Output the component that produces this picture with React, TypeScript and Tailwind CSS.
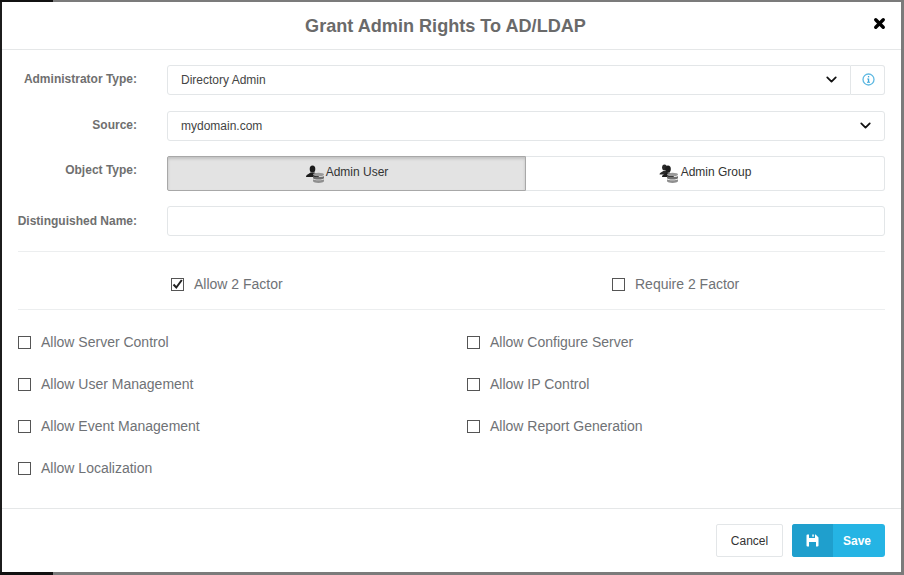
import React from 'react';
import { ChevronDown, X } from 'lucide-react';

const AdminIcon: React.FC<{ group?: boolean }> = ({ group = false }) => (
  <svg width="20" height="20" viewBox="0 0 20 20" className="shrink-0">
    {group && (
      <>
        <ellipse cx="5.500" cy="3.500" rx="2.400" ry="3" fill="#2a2a2a" />
        <path d="M0.500 10.500c0-2 2.500-2.500 3.800-3.500h2.400c1.300 1 3 1.500 3.500 3.500z" fill="#2a2a2a" />
      </>
    )}
    <ellipse cx={group ? 9 : 7.500} cy="5" rx="2.800" ry="3.500" fill="#1c1c1c" />
    <path d={group ? 'M3 13c0-2.500 3-3 4.500-4.500h3c1.500 1.500 4 2 4.500 4.500z' : 'M1 13c0-2.500 3-3 4.500-4.500h4c1.500 1.500 4 2 4.500 4.500z'} fill="#1c1c1c" />
    <ellipse cx="13.500" cy="10.500" rx="5.500" ry="1.800" fill="#9a9a9a" />
    <path d="M8 12c1 1.400 10 1.400 11 0v2.300c-1 1.600-10 1.600-11 0z" fill="#6f6f6f" />
    <path d="M8 15.300c1 1.400 10 1.400 11 0v2c-1 2.200-10 2.200-11 0z" fill="#8f8f8f" />
  </svg>
);

const InfoIcon: React.FC = () => (
  <svg width="13" height="13" viewBox="0 0 13 13" className="shrink-0">
    <circle cx="6.500" cy="6.500" r="5.500" fill="none" stroke="#5fb9e2" strokeWidth="1.300" />
    <rect x="5.900" y="3" width="1.300" height="1.400" fill="#3fa6d8" />
    <path d="M5.200 5.500h2v3.300h.8v.9H5v-.9h.9V6.400h-.7z" fill="#3fa6d8" />
  </svg>
);

const SaveIcon: React.FC = () => (
  <svg width="13" height="13" viewBox="0 0 13 13" className="shrink-0">
    <path
      fillRule="evenodd"
      d="M0.500 1.500a1 1 0 0 1 1-1h1.500v3.500h6V0.500h.6l2.900 2.900v8.100a1 1 0 0 1-1 1h-1.500V8H3v4.500H1.500a1 1 0 0 1-1-1z"
      fill="#fff"
    />
    <rect x="6.300" y="0.500" width="1.500" height="2.200" fill="#fff" />
  </svg>
);

const Check: React.FC<{ label: string; checked?: boolean }> = ({ label, checked = false }) => (
  <label className="flex items-center gap-[10px] text-[14px] text-[#6f7276]">
    <span className="w-[13px] h-[13px] border border-[#555] bg-white flex items-center justify-center shrink-0">
      {checked && (
        <svg width="11" height="11" viewBox="0 0 11 11">
          <path d="M1.500 5.500l2.800 3L9.800 1" fill="none" stroke="#222" strokeWidth="2" />
        </svg>
      )}
    </span>
    {label}
  </label>
);

const FieldLabel: React.FC<{ text: string }> = ({ text }) => (
  <div className="w-[135px] -mt-[2px] text-right text-[12px] font-bold text-[#6f6f6f] whitespace-nowrap shrink-0">{text}</div>
);

const Select: React.FC<{ value: string; className?: string }> = ({ value, className = '' }) => (
  <div className={`flex-1 h-[30px] border border-[#e3e6e8] rounded-[3px] bg-white flex items-center justify-between pl-[13px] pr-[10px] text-[12px] text-[#444] ${className}`}>
    {value}
    <ChevronDown className="w-[17px] h-[17px] text-[#111] -mt-[2px]" strokeWidth={2.500} />
  </div>
);

const App: React.FC = () => {
  return (
    <div className="w-[904px] h-[575px] flex flex-col bg-[#7b7b7b] overflow-hidden font-['Liberation_Sans',Arial,sans-serif]">
      <div className="h-[2px] flex shrink-0">
        <div className="w-[53px] bg-[#111]" />
        <div className="flex-1 bg-[#7b7b7b]" />
      </div>
      <div className="flex-1 flex min-h-0">
        <div className="w-[2px] bg-[#1c1c1c] shrink-0" />
        <div className="w-[899px] bg-white flex flex-col">
          <div className="h-[48px] border-b border-[#e5e7e8] flex items-center shrink-0">
            <div className="w-[887px] text-center text-[18.1px] font-bold text-[#6a6a6a] pt-[3px]">Grant Admin Rights To AD/LDAP</div>
            <X className="w-[15px] h-[15px] text-black -ml-[17px] -mt-[4px]" strokeWidth={5.500} />
          </div>

          <div className="flex-1 pl-[16px] pr-[16px] flex flex-col">
            <div className="flex items-center mt-[15px]">
              <div className="-ml-[16px] flex items-center shrink-0">
                <FieldLabel text="Administrator Type:" />
              </div>
              <div className="ml-[30px] flex flex-1">
                <Select value="Directory Admin" className="rounded-r-none" />
                <div className="w-[34px] h-[30px] border border-l-0 border-[#e3e6e8] rounded-r-[3px] flex items-center justify-center pb-[2px] pl-[1px]">
                  <InfoIcon />
                </div>
              </div>
            </div>

            <div className="flex items-center mt-[16px]">
              <div className="-ml-[16px] shrink-0">
                <FieldLabel text="Source:" />
              </div>
              <Select value="mydomain.com" className="ml-[30px]" />
            </div>

            <div className="flex mt-[15px]">
              <div className="-ml-[16px] shrink-0 pt-[7px]">
                <FieldLabel text="Object Type:" />
              </div>
              <div className="ml-[30px] flex-1 flex h-[35px] text-[12px] text-[#333]">
                <div className="w-[359px] bg-[#e3e3e3] border border-[#a8a8a8] shadow-[inset_0_2px_3px_rgba(0,0,0,0.15)] rounded-l-[2px] flex items-center justify-center gap-[1px]">
                  <AdminIcon />
                  <span className="-mt-[3px]">Admin User</span>
                </div>
                <div className="flex-1 border border-l-0 border-[#e3e6e8] rounded-r-[3px] flex items-center justify-center gap-[2px]">
                  <AdminIcon group />
                  <span className="-mt-[3px]">Admin Group</span>
                </div>
              </div>
            </div>

            <div className="flex items-center mt-[15px]">
              <div className="-ml-[16px] shrink-0">
                <div className="w-[135px] text-right text-[12px] font-bold text-[#6f6f6f] whitespace-nowrap">Distinguished Name:</div>
              </div>
              <input className="ml-[30px] flex-1 h-[30px] border border-[#e3e6e8] rounded-[3px] bg-white outline-none" />
            </div>

            <div className="border-t border-[#eceeef] mt-[15px]" />

            <div className="flex h-[57px] items-center pt-[8px]">
              <div className="w-[594px] pl-[153px]">
                <Check label="Allow 2 Factor" checked />
              </div>
              <Check label="Require 2 Factor" />
            </div>

            <div className="border-t border-[#eceeef]" />

            <div className="grid grid-cols-[449px_1fr] auto-rows-[42px] items-center mt-[11px]">
              <Check label="Allow Server Control" />
              <Check label="Allow Configure Server" />
              <Check label="Allow User Management" />
              <Check label="Allow IP Control" />
              <Check label="Allow Event Management" />
              <Check label="Allow Report Generation" />
              <Check label="Allow Localization" />
            </div>
          </div>

          <div className="h-[64px] border-t border-[#e5e7e8] flex items-start justify-end gap-[9px] pt-[15px] pr-[16px] shrink-0">
            <button className="w-[67px] h-[33px] border border-[#e3e6e8] rounded-[2px] bg-white text-[12px] text-[#333]">Cancel</button>
            <button className="w-[93px] h-[33px] rounded-[3px] bg-[#25b4e4] text-white text-[12px] font-bold flex overflow-hidden">
              <span className="w-[41px] h-full bg-[#1f9fcd] flex items-center justify-center">
                <SaveIcon />
              </span>
              <span className="flex-1 h-full flex items-center justify-center pr-[4px]">Save</span>
            </button>
          </div>
        </div>
        <div className="flex-1 bg-[#7b7b7b]" />
      </div>
      <div className="h-[3px] flex shrink-0">
        <div className="w-[53px] bg-[#111]" />
        <div className="flex-1 bg-[#7b7b7b]" />
      </div>
    </div>
  );
};

export default App;
